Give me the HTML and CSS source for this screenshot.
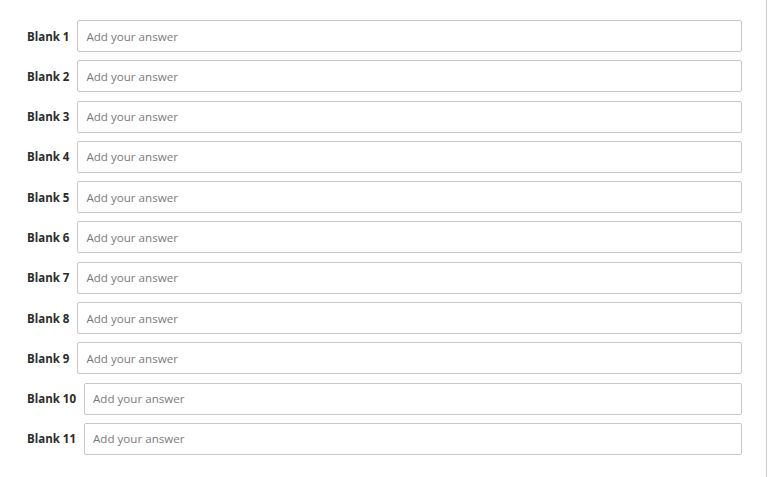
FILE: index.html
```html
<!DOCTYPE html>
<html>
<head>
<meta charset="utf-8">
<link rel="stylesheet" href="styles.css">
</head>
<body>
<div class="panel">
  <div class="row"><label class="label">Blank 1</label><input class="answer" placeholder="Add your answer"></div>
  <div class="row"><label class="label">Blank 2</label><input class="answer" placeholder="Add your answer"></div>
  <div class="row"><label class="label">Blank 3</label><input class="answer" placeholder="Add your answer"></div>
  <div class="row"><label class="label">Blank 4</label><input class="answer" placeholder="Add your answer"></div>
  <div class="row"><label class="label">Blank 5</label><input class="answer" placeholder="Add your answer"></div>
  <div class="row"><label class="label">Blank 6</label><input class="answer" placeholder="Add your answer"></div>
  <div class="row"><label class="label">Blank 7</label><input class="answer" placeholder="Add your answer"></div>
  <div class="row"><label class="label">Blank 8</label><input class="answer" placeholder="Add your answer"></div>
  <div class="row"><label class="label">Blank 9</label><input class="answer" placeholder="Add your answer"></div>
  <div class="row"><label class="label">Blank 10</label><input class="answer" placeholder="Add your answer"></div>
  <div class="row"><label class="label">Blank 11</label><input class="answer" placeholder="Add your answer"></div>
</div>
</body>
</html>
```
FILE: styles.css
```css
html, body {
  margin: 0;
  padding: 0;
  background: #fff;
}
body {
  font-family: "Open Sans", "Noto Sans", sans-serif;
  color: #2b2b2b;
}
.panel {
  width: 767px;
  height: 477px;
  box-sizing: border-box;
  border-right: 1px solid #cfcfcf;
  padding: 20px 24px 0 27px;
  display: flex;
  flex-direction: column;
  gap: 8.3px;
}
.row {
  display: flex;
  align-items: center;
  gap: 8px;
}
.label {
  font-size: 11.5px;
  font-weight: 700;
  white-space: nowrap;
}
.answer {
  flex: 1;
  height: 32px;
  box-sizing: border-box;
  border: 1px solid #c8c8c8;
  border-radius: 2px;
  padding: 0 8px;
  font-family: "Open Sans", "Noto Sans", sans-serif;
  font-size: 11.6px;
  color: #252423;
  outline: none;
  margin: 0;
}
.answer::placeholder {
  color: #7a7a7a;
  opacity: 1;
}
```
